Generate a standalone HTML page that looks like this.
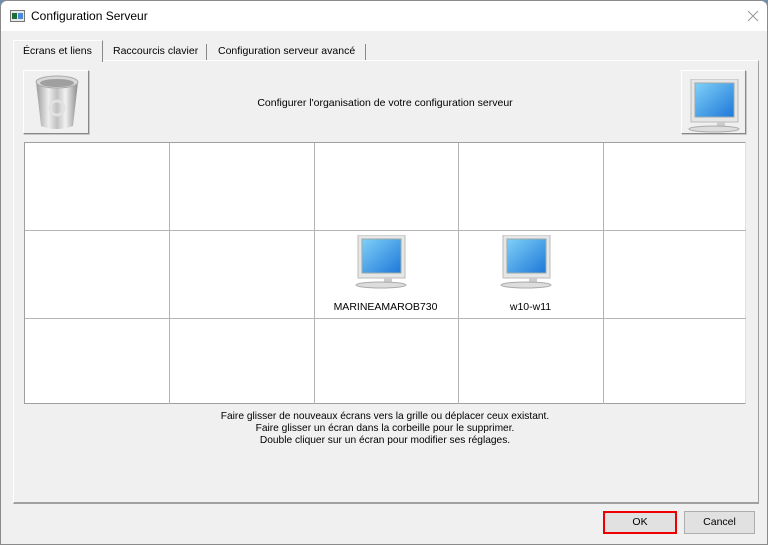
<!DOCTYPE html>
<html><head><meta charset="utf-8"><style>
*{margin:0;padding:0;box-sizing:border-box}
body{width:768px;height:545px;background:#6f8fb0;font-family:"Liberation Sans",sans-serif;font-size:11px;color:#000;overflow:hidden;position:relative}
.win{position:absolute;left:0;top:0;width:768px;height:545px;background:#f0f0f0;border:1px solid #8a8a8a;border-radius:7px 7px 0 0;overflow:hidden}
.title{position:absolute;left:0;top:0;width:766px;height:30px;background:#fff}
.title .t{position:absolute;left:30px;top:8px;font-size:12px}
.abs{position:absolute}
.tab{position:absolute;top:40px;height:20px;font-size:10.5px;padding-top:4px}
.panel{position:absolute;left:12px;top:59px;width:746px;height:444px;border:1px solid #fff;border-right-color:#a0a0a0;border-bottom:2px solid #a0a0a0}
.btn{position:absolute;background:#f0f0f0;border:1px solid;border-color:#fff #888 #888 #fff;box-shadow:1px 1px 0 #c8c8c8}
.grid{position:absolute;left:23px;top:141px;width:722px;height:262px;background:#fff;border:1px solid #a0a0a0;border-right-color:#e0e0e0}
.vl{position:absolute;top:0;width:1px;height:261px;background:#b4b4b4}
.hl{position:absolute;left:0;width:721px;height:1px;background:#b4b4b4}
.lbl{position:absolute;width:145px;text-align:center;font-size:10.5px;top:300px}
.pb{position:absolute;height:23px;background:#e1e1e1;border:1px solid #adadad;text-align:center;line-height:21px;font-size:10.5px}
</style></head><body>
<div class="win">
<div class="title">
<svg class="abs" style="left:9px;top:9px" width="15" height="12"><rect x="0.5" y="0.5" width="14" height="11" fill="#e8e8e8" stroke="#777"/><rect x="2" y="3" width="5" height="6" fill="#1e6e3c"/><rect x="8" y="3" width="5" height="6" fill="#4a8ad0"/></svg>
<div class="t">Configuration Serveur</div>
<svg class="abs" style="left:746px;top:9px" width="12" height="12"><path d="M1 1L11 11M11 1L1 11" stroke="#999" stroke-width="1"/></svg>
</div>
<div class="panel"></div>
<div class="abs" style="left:12px;top:39px;width:90px;height:22px;background:#f0f0f0;border:1px solid #fff;border-bottom:none;border-right:1px solid #888"></div>
<div class="tab" style="left:22px">Écrans et liens</div>
<div class="tab" style="left:112px">Raccourcis clavier</div>
<div class="abs" style="left:205px;top:43px;width:1px;height:16px;background:#888"></div>
<div class="tab" style="left:217px">Configuration serveur avancé</div>
<div class="abs" style="left:364px;top:43px;width:1px;height:16px;background:#888"></div>

<div class="btn" style="left:22px;top:69px;width:66px;height:64px">
<svg class="abs" style="left:9px;top:3px" width="48" height="58" viewBox="0 0 48 58">
<defs><linearGradient id="g" x1="0" x2="1"><stop offset="0" stop-color="#9a9a9a"/><stop offset=".3" stop-color="#eee"/><stop offset=".5" stop-color="#c0c0c0"/><stop offset=".7" stop-color="#f2f2f2"/><stop offset="1" stop-color="#8a8a8a"/></linearGradient></defs>
<path d="M3 8 L8 52 Q24 58 40 52 L45 8 Z" fill="url(#g)"/>
<ellipse cx="24" cy="8" rx="21" ry="6" fill="#d8d8d8" stroke="#aaa"/>
<ellipse cx="24" cy="9" rx="17" ry="4" fill="#9f9f9f"/>
<circle cx="24" cy="34" r="7" fill="none" stroke="#e2e2e2" stroke-width="3"/>
</svg></div>
<div class="abs" style="left:0;top:96px;width:768px;text-align:center;font-size:10.5px">Configurer l'organisation de votre configuration serveur</div>
<div class="btn" style="left:680px;top:69px;width:65px;height:64px">
<svg class="abs" style="left:6px;top:8px" width="52" height="54" viewBox="0 0 52 54"><rect x="3" y="0" width="47" height="43" fill="#e6e6e6" stroke="#bbb"/><defs><linearGradient id="s1" x1="0" y1="0" x2="1" y2="1"><stop offset="0" stop-color="#7fd0f8"/><stop offset="1" stop-color="#1e78d8"/></linearGradient></defs><rect x="7" y="4" width="39" height="34" fill="url(#s1)" stroke="#9aa"/><rect x="29" y="43" width="8" height="5" fill="#ccc"/><ellipse cx="26" cy="50" rx="25" ry="3" fill="#ddd" stroke="#aaa"/></svg></div>

<div class="grid">
<div class="vl" style="left:144px"></div><div class="vl" style="left:289px"></div><div class="vl" style="left:433px"></div><div class="vl" style="left:578px"></div>
<div class="hl" style="top:87px"></div><div class="hl" style="top:175px"></div>
</div>
<svg class="abs" style="left:354px;top:234px" width="52" height="54" viewBox="0 0 52 54"><defs><linearGradient id="s2" x1="0" y1="0" x2="1" y2="1"><stop offset="0" stop-color="#7fd0f8"/><stop offset="1" stop-color="#1e78d8"/></linearGradient></defs><rect x="3" y="0" width="47" height="43" fill="#e6e6e6" stroke="#bbb"/><rect x="7" y="4" width="39" height="34" fill="url(#s2)" stroke="#9aa"/><rect x="29" y="43" width="8" height="5" fill="#ccc"/><ellipse cx="26" cy="50" rx="25" ry="3" fill="#ddd" stroke="#aaa"/></svg>
<svg class="abs" style="left:499px;top:234px" width="52" height="54" viewBox="0 0 52 54"><rect x="3" y="0" width="47" height="43" fill="#e6e6e6" stroke="#bbb"/><rect x="7" y="4" width="39" height="34" fill="url(#s2)" stroke="#9aa"/><rect x="29" y="43" width="8" height="5" fill="#ccc"/><ellipse cx="26" cy="50" rx="25" ry="3" fill="#ddd" stroke="#aaa"/></svg>
<div class="lbl" style="left:312px">MARINEAMAROB730</div>
<div class="lbl" style="left:457px">w10-w11</div>

<div class="abs" style="left:0;top:410px;width:768px;text-align:center;font-size:10.2px;line-height:12px">Faire glisser de nouveaux écrans vers la grille ou déplacer ceux existant.<br>Faire glisser un écran dans la corbeille pour le supprimer.<br>Double cliquer sur un écran pour modifier ses réglages.</div>

<div class="pb" style="left:602px;top:510px;width:74px;border:2px solid #e00;line-height:19px">OK</div>
<div class="pb" style="left:683px;top:510px;width:71px">Cancel</div>
</div>
</body></html>
